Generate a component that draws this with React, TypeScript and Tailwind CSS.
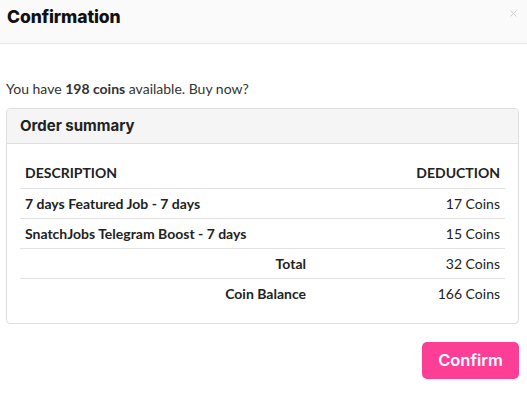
import { X } from 'lucide-react';

const rows = [
    { desc: '7 days Featured Job - 7 days', coins: '17 Coins' },
    { desc: 'SnatchJobs Telegram Boost - 7 days', coins: '15 Coins' },
];

const heading = { fontFamily: 'Inter, "Noto Sans", sans-serif' };

export default function App() {
    return (
        <div className="w-[527px] h-[394px] bg-white text-[#212529]" style={{ fontFamily: 'Lato, "Noto Sans", sans-serif' }}>
            {/* Header */}
            <div className="h-[44px] bg-[#fafafa] border-b border-[#e9e9e9] flex items-center justify-between pl-[7px] pr-[8px]">
                <h2 className="text-[17.5px] font-extrabold text-[#111] tracking-[-0.1px] mt-[-8px]" style={heading}>Confirmation</h2>
                <X className="w-[11px] h-[11px] text-[#c8c8c8] mt-[-16px]" strokeWidth={2} />
            </div>

            {/* Body */}
            <div className="pl-[6px] pr-[8px] pt-[35px]">
                <p className="text-[14px] leading-[20px] text-[#333]">
                    You have <span className="font-bold">198 coins</span> available. Buy now?
                </p>

                <div className="mt-[9px] h-[216px] border border-[#dedede] rounded-[4px] overflow-hidden">
                    <div className="h-[35px] bg-[#f5f5f5] border-b border-[#dedede] flex items-center px-[13px]">
                        <h3 className="text-[15px] font-bold text-[#222]" style={heading}>Order summary</h3>
                    </div>
                    <div className="px-[13px] pt-[13px]">
                        <table className="w-full text-[14px] text-[#222]">
                            <thead>
                                <tr className="border-b border-[#e2e2e2]">
                                    <th className="h-[31px] px-[5px] text-left font-bold">DESCRIPTION</th>
                                    <th className="h-[31px] px-[5px] text-right font-bold">DEDUCTION</th>
                                </tr>
                            </thead>
                            <tbody>
                                {rows.map((r) => (
                                    <tr key={r.desc} className="border-b border-[#e2e2e2]">
                                        <td className="h-[30px] px-[5px] font-bold">{r.desc}</td>
                                        <td className="h-[30px] px-[5px] text-right">{r.coins}</td>
                                    </tr>
                                ))}
                                <tr className="border-b border-[#e2e2e2]">
                                    <td className="h-[30px] px-[5px] text-right font-bold w-[291px]">Total</td>
                                    <td className="h-[30px] px-[5px] text-right">32 Coins</td>
                                </tr>
                                <tr>
                                    <td className="h-[31px] px-[5px] text-right font-bold">Coin Balance</td>
                                    <td className="h-[31px] px-[5px] text-right">166 Coins</td>
                                </tr>
                            </tbody>
                        </table>
                    </div>
                </div>

                <div className="flex justify-end mt-[18px]">
                    <button className="w-[97px] h-[37px] rounded-[5px] bg-[#fd3e97] text-white text-[16.5px] font-semibold" style={heading}>
                        Confirm
                    </button>
                </div>
            </div>
        </div>
    );
}
